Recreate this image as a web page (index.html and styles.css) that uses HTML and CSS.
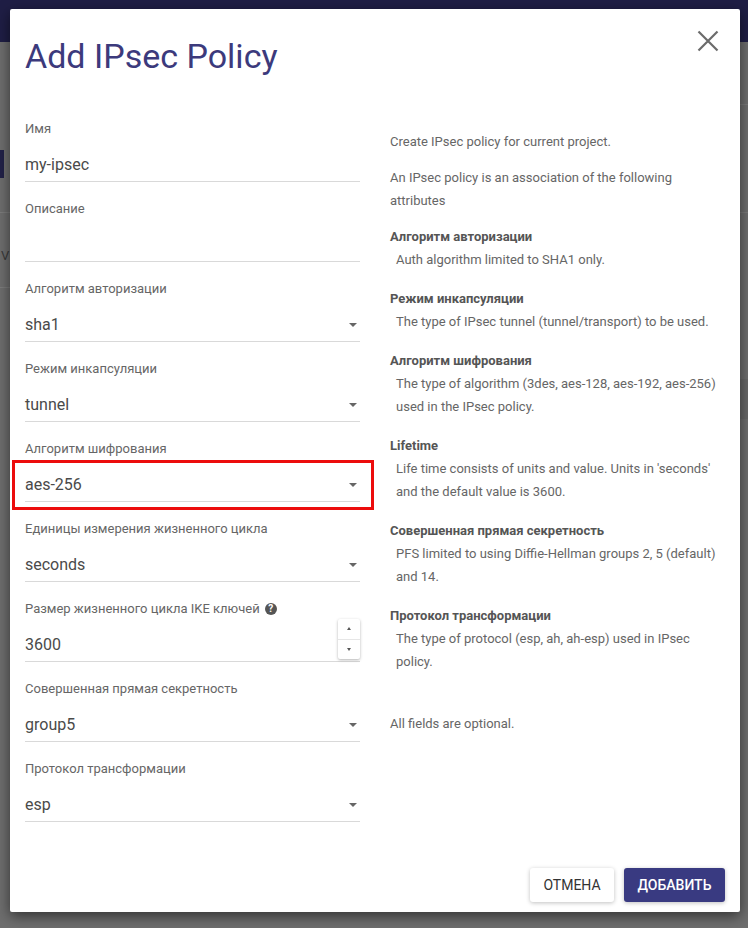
FILE: index.html
```html
<!DOCTYPE html>
<html lang="ru">
<head>
<meta charset="utf-8">
<title>Add IPsec Policy</title>
<link rel="stylesheet" href="styles.css">
</head>
<body>
<div class="backdrop">
  <div class="bg-header"></div>
  <div class="bg-content">
    <div class="bg-left">
      <div class="bg-tab"></div>
      <div class="bg-line l1"></div>
      <div class="bg-text">V</div>
      <div class="bg-line l2"></div>
    </div>
    <div class="bg-right">
      <div class="bg-rline r1"></div>
      <div class="bg-rline r2"></div>
      <div class="bg-rband"></div>
    </div>
  </div>
</div>

<div class="modal">
  <div class="modal-header">
    <h1 class="modal-title">Add IPsec Policy</h1>
    <button class="close-btn" aria-label="close">
      <svg width="22" height="22" viewBox="0 0 22 22"><path d="M1.5 1.5 L20.5 20.5 M20.5 1.5 L1.5 20.5" stroke="#6b6b6b" stroke-width="2.2" fill="none"/></svg>
    </button>
  </div>

  <div class="modal-body">
    <div class="form-col">
      <div class="field">
        <div class="label">Имя</div>
        <div class="control"><span class="value">my-ipsec</span></div>
      </div>
      <div class="field">
        <div class="label">Описание</div>
        <div class="control"><span class="value"></span></div>
      </div>
      <div class="field">
        <div class="label">Алгоритм авторизации</div>
        <div class="control select"><span class="value">sha1</span><span class="caret"></span></div>
      </div>
      <div class="field">
        <div class="label">Режим инкапсуляции</div>
        <div class="control select"><span class="value">tunnel</span><span class="caret"></span></div>
      </div>
      <div class="field">
        <div class="label">Алгоритм шифрования</div>
        <div class="control select highlighted"><span class="value">aes-256</span><span class="caret"></span><span class="highlight-box"></span></div>
      </div>
      <div class="field">
        <div class="label">Единицы измерения жизненного цикла</div>
        <div class="control select"><span class="value">seconds</span><span class="caret"></span></div>
      </div>
      <div class="field">
        <div class="label">Размер жизненного цикла IKE ключей <span class="help">?</span></div>
        <div class="control number"><span class="value">3600</span>
          <span class="spinner">
            <span class="spin up"><span class="tri-up"></span></span>
            <span class="spin down"><span class="tri-down"></span></span>
          </span>
        </div>
      </div>
      <div class="field">
        <div class="label">Совершенная прямая секретность</div>
        <div class="control select"><span class="value">group5</span><span class="caret"></span></div>
      </div>
      <div class="field">
        <div class="label">Протокол трансформации</div>
        <div class="control select"><span class="value">esp</span><span class="caret"></span></div>
      </div>
    </div>

    <div class="help-col">
      <p class="p">Create IPsec policy for current project.</p>
      <p class="p">An IPsec policy is an association of the following attributes</p>
      <dl class="defs">
        <dt>Алгоритм авторизации</dt>
        <dd>Auth algorithm limited to SHA1 only.</dd>
        <dt>Режим инкапсуляции</dt>
        <dd>The type of IPsec tunnel (tunnel/transport) to be used.</dd>
        <dt>Алгоритм шифрования</dt>
        <dd>The type of algorithm (3des, aes-128, aes-192, aes-256) used in the IPsec policy.</dd>
        <dt>Lifetime</dt>
        <dd>Life time consists of units and value. Units in 'seconds' and the default value is 3600.</dd>
        <dt>Совершенная прямая секретность</dt>
        <dd>PFS limited to using Diffie-Hellman groups 2, 5 (default) and 14.</dd>
        <dt>Протокол трансформации</dt>
        <dd>The type of protocol (esp, ah, ah-esp) used in IPsec policy.</dd>
      </dl>
      <p class="p note">All fields are optional.</p>
    </div>
  </div>

  <div class="modal-footer">
    <button class="btn btn-default">Отмена</button>
    <button class="btn btn-primary">Добавить</button>
  </div>
</div>
</body>
</html>
```

FILE: styles.css
```css
* { box-sizing: border-box; }

html, body {
  margin: 0;
  padding: 0;
  width: 748px;
  height: 928px;
  overflow: hidden;
}

body {
  font-family: Roboto, "Noto Sans", "DejaVu Sans", sans-serif;
  background: #6f6f6f;
  position: relative;
}

/* page behind the overlay */
.backdrop {
  position: absolute;
  inset: 0;
  display: flex;
  flex-direction: column;
}
.bg-header {
  height: 42px;
  background: #1f1e45;
}
.bg-content {
  flex: 1;
  display: flex;
  justify-content: space-between;
  background: #6e6e6e;
}
.bg-left {
  width: 12px;
  display: flex;
  flex-direction: column;
}
.bg-tab {
  margin-top: 108px;
  width: 4px;
  height: 28px;
  background: #222148;
}
.bg-line {
  height: 1px;
  background: #7c7c7c;
}
.l1 { margin-top: 34px; }
.l2 { margin-top: 26px; }
.bg-text {
  margin-top: 38px;
  margin-left: 1px;
  font-size: 13px;
  color: #3a3a3a;
  line-height: 10px;
  height: 10px;
}
.bg-right {
  width: 12px;
  display: flex;
  flex-direction: column;
}
.bg-rline {
  height: 1px;
  background: #7a7a7a;
}
.r1 { margin-top: 62px; }
.r2 { margin-top: 107px; }
.bg-rband {
  margin-top: 166px;
  height: 40px;
  background: #686868;
}

/* modal */
.modal {
  position: absolute;
  left: 10px;
  top: 9px;
  width: 730px;
  height: 903px;
  background: #ffffff;
  border-radius: 2px;
  box-shadow: 0 4px 14px rgba(0, 0, 0, 0.55);
  display: flex;
  flex-direction: column;
  padding: 0 15px;
}

.modal-header {
  display: flex;
  justify-content: space-between;
  align-items: flex-start;
  padding-top: 26px;
}
.modal-title {
  margin: 0;
  font-size: 34px;
  font-weight: 400;
  line-height: 42px;
  color: #3c3a7c;
  letter-spacing: 0;
}
.close-btn {
  margin: 0;
  padding: 0;
  border: 0;
  background: transparent;
  width: 22px;
  height: 22px;
  margin-top: -5px;
  margin-right: 6px;
}
.close-btn svg { display: block; }

.modal-body {
  display: flex;
  gap: 30px;
  margin-top: 42px;
}

.form-col {
  width: 335px;
  flex: none;
}

.field {
  margin-bottom: 17px;
}
.label {
  font-size: 13px;
  line-height: 20px;
  height: 20px;
  color: #666666;
  display: flex;
  align-items: center;
  gap: 5px;
}
.help {
  display: inline-flex;
  width: 12px;
  height: 12px;
  border-radius: 50%;
  background: #555;
  color: #fff;
  font-size: 10px;
  font-weight: 700;
  line-height: 12px;
  justify-content: center;
}
.control {
  position: relative;
  margin-top: 3px;
  height: 40px;
  border-bottom: 1px solid #d9d9d9;
  padding-top: 6px;
  display: flex;
  align-items: flex-start;
  justify-content: space-between;
}
.value {
  font-size: 16px;
  line-height: 33px;
  height: 33px;
  color: #4a4a4a;
}
.caret {
  width: 0;
  height: 0;
  border-left: 4.5px solid transparent;
  border-right: 4.5px solid transparent;
  border-top: 4.5px solid #666;
  margin-top: 15px;
  margin-right: 3px;
}
.highlight-box {
  position: absolute;
  left: -13px;
  right: -14px;
  top: -2px;
  bottom: -9px;
  border: 3px solid #ec0c0c;
  pointer-events: none;
}

.number { padding-top: 6px; }
.spinner {
  position: absolute;
  right: 0;
  top: -3px;
  width: 22px;
  height: 40px;
  display: flex;
  flex-direction: column;
  background: #fff;
  border-radius: 2px;
  box-shadow: 0 1px 3px rgba(0, 0, 0, 0.3);
}
.spin {
  flex: 1;
  display: flex;
  align-items: center;
  justify-content: center;
}
.spin.up { border-bottom: 1px solid #e6e6e6; }
.tri-up {
  width: 0; height: 0;
  border-left: 2.5px solid transparent;
  border-right: 2.5px solid transparent;
  border-bottom: 3px solid #555;
}
.tri-down {
  width: 0; height: 0;
  border-left: 2.5px solid transparent;
  border-right: 2.5px solid transparent;
  border-top: 3px solid #555;
}

/* help column */
.help-col {
  width: 335px;
  flex: none;
  padding-top: 11px;
  font-size: 13px;
  line-height: 23px;
  color: #666666;
}
.p {
  margin: 0 0 13px 0;
}
.defs {
  margin: 0;
}
.defs dt {
  font-weight: 700;
  color: #555555;
}
.defs dd {
  margin: 0 0 16px 0;
  padding-left: 6px;
}
.note {
  margin-top: 39px;
}

/* footer */
.modal-footer {
  margin-top: auto;
  display: flex;
  justify-content: flex-end;
  gap: 10px;
  padding-bottom: 10px;
}
.btn {
  height: 34px;
  border: 0;
  border-radius: 3px;
  font-family: Roboto, "Noto Sans", sans-serif;
  font-size: 14px;
  text-transform: uppercase;
  padding: 0 10px;
  letter-spacing: 0;
}
.btn-default {
  width: 84px;
  font-weight: 400;
  background: #ffffff;
  color: #333333;
  box-shadow: 0 1px 4px rgba(0, 0, 0, 0.25);
}
.btn-primary {
  width: 101px;
  font-weight: 500;
  background: #393a81;
  color: #ffffff;
  box-shadow: 0 1px 4px rgba(0, 0, 0, 0.25);
}
```
